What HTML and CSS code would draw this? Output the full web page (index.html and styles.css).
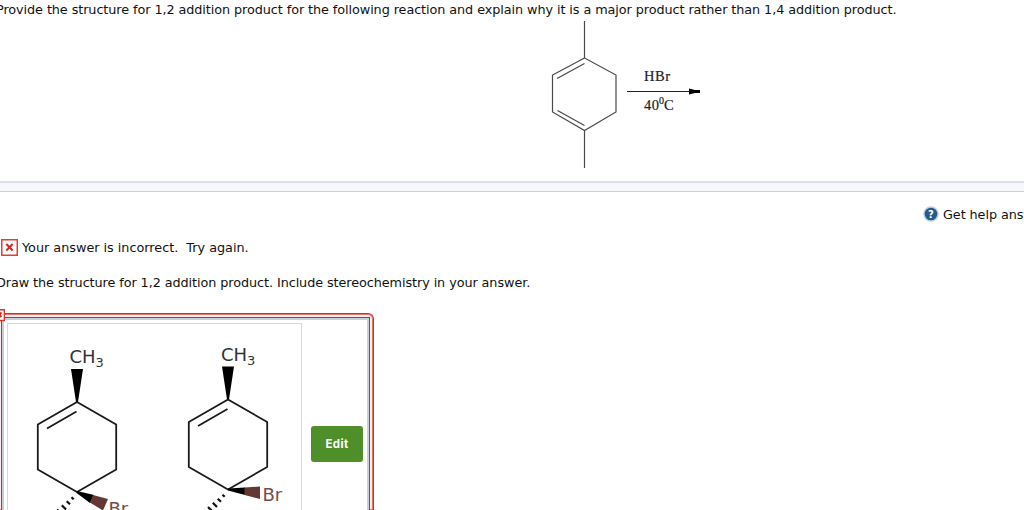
FILE: index.html
```html
<!DOCTYPE html>
<html lang="en">
<head>
  <meta charset="UTF-8">
  <title>1,2 addition product</title>
  <link rel="stylesheet" href="styles.css">
</head>
<body>
  <div class="question">
    <p class="question-text">Provide the structure for 1,2 addition product for the following reaction and explain why it is a major product rather than 1,4 addition product.</p>
    <svg class="reaction" width="160" height="152" viewBox="545 18 160 152">
      <g fill="none" stroke="#484848" stroke-width="1.2">
        <path d="M584.5 21V58L616 75V112L584.5 130.500L552.500 112V75L584.500 58M584.500 130.500V168"/>
        <path d="M557 78.500L584.500 63.500M557.500 110.500L584.500 125.500"/>
      </g>
      <path class="arrow" d="M627 91.500H692"/>
      <path d="M689 88.500L695 90H700V93H695L689 94.500Z"/>
      <text class="reagent" x="644" y="81" textLength="26">HBr</text>
      <text class="reagent" x="644" y="110" textLength="15">40</text>
      <text class="reagent degree" x="659" y="104">0</text>
      <text class="reagent" x="664" y="110">C</text>
    </svg>
  </div>

  <div class="divider"></div>

  <div class="help">
    <svg width="16" height="16" viewBox="0 0 16 16">
      <circle cx="8" cy="8" r="7.800" fill="#b9d3e4"/>
      <circle cx="8" cy="8" r="6.300" fill="#28598a"/>
      <text class="help-mark" x="8" y="11.700">?</text>
    </svg>
    <span>Get help answering</span>
  </div>

  <div class="feedback">
    <svg width="17" height="17" viewBox="0 0 17 17">
      <rect x=".75" y=".75" width="15.500" height="15.500" fill="#fff" stroke="#dc4038" stroke-width="1.500"/>
      <path class="cross" d="M5.300 5L11.700 11.500M11.700 5L5.300 11.500"/>
    </svg>
    <span>Your answer is incorrect.&nbsp; Try again.</span>
  </div>

  <p class="task">Draw the structure for 1,2 addition product. Include stereochemistry in your answer.</p>

  <div class="answer">
    <div class="answer-inner">
      <svg class="canvas" width="293" height="186" viewBox="8 324 293 186">
        <defs>
          <g id="ring">
            <path class="bond" d="M0 0L39.200 22.500V67.500L0 90L-39.200 67.500V22.500ZM-30 26.500L-.5 9.500"/>
            <path d="M-6 -33H6L1 0H-1Z"/>
            <path class="hash" d="M-5.500 95.200L-3.300 97.300M-10.300 99.200L-7 102.300M-15.200 103.300L-11 107.500M-20 107.500L-15 112.500"/>
          </g>
        </defs>
        <use href="#ring" x="77" y="402"/>
        <text class="atom" x="69.500" y="363">CH<tspan class="sub" dy="4">3</tspan></text>
        <path d="M77 491L94 495L90 503L76.500 493Z"/>
        <path class="br" d="M93 495L108 499L103 510.500L90 502.500Z"/>
        <text class="atom br-label" x="108.500" y="515">Br</text>

        <use href="#ring" x="228" y="399.500"/>
        <text class="atom" x="221" y="361">CH<tspan class="sub" dy="4">3</tspan></text>
        <path d="M228 488.500L245 487.500V495L228 490.500Z"/>
        <path class="br" d="M244.500 487.500L260 486.500V499L244.500 495Z"/>
        <text class="atom br-label" x="262.500" y="500.500">Br</text>
      </svg>
      <button class="edit">Edit</button>
    </div>
    <svg class="badge" width="9" height="13" viewBox="0 0 9 13">
      <path d="M-1 .75H5.300V11.500H-1" fill="#fff" stroke="#d9352d" stroke-width="1.300"/>
      <path class="cross" d="M-2 3.500L2.500 8M2.500 3.500L-2 8"/>
    </svg>
  </div>
</body>
</html>
```

FILE: styles.css
```css
body {
  margin: 0;
  height: 510px;
  overflow: hidden;
  background: #fff;
  color: #111;
  font-family: Verdana, "DejaVu Sans", sans-serif;
  font-size: 12.8px;
  letter-spacing: -.076px;
  line-height: 16px;
}
p {
  margin: 0;
  white-space: nowrap;
}
svg {
  flex: none;
  letter-spacing: 0;
}
.question {
  height: 181px;
}
.question-text {
  margin-left: -4px;
  padding-top: 2px;
}
.reaction {
  display: block;
  margin: 0 0 0 545px;
}
.arrow {
  stroke: #222;
  stroke-width: 1.2;
}
.reagent {
  font-family: "Liberation Serif", serif;
  font-size: 14.5px;
  fill: #222;
  stroke: #222;
  stroke-width: .2;
}
.degree {
  font-size: 10px;
}
.divider {
  height: 8px;
  background: #f6f8fb;
  border-top: 2px solid #dce1e8;
  border-bottom: 1px solid #c5d2dc;
}
.help {
  display: flex;
  gap: 4px;
  margin: 14px 0 0 923px;
  white-space: nowrap;
}
.help span {
  padding-top: 1px;
}
.help-mark {
  font-size: 10px;
  font-weight: bold;
  fill: #fff;
  text-anchor: middle;
}
.feedback {
  display: flex;
  align-items: center;
  gap: 4px;
  margin: 16px 0 0 1px;
  height: 17px;
  letter-spacing: -.01px;
}
.cross {
  fill: none;
  stroke: #d9281f;
  stroke-width: 2;
}
.task {
  margin: 19px 0 0 -4px;
}
.answer {
  position: relative;
  box-sizing: border-box;
  width: 377px;
  height: 197px;
  margin: 22px 0 0 -3px;
  border: 1px solid #d9281f;
  border-bottom: 0;
  border-radius: 6px 6px 0 0;
  padding: 3px 3px 0;
  background: #fdeceb;
  box-shadow: inset 0 0 0 1px #e8746e;
}
.answer-inner {
  display: flex;
  gap: 9px;
  box-sizing: border-box;
  height: 193px;
  padding: 5px 4px 0 5px;
  border: 1px solid #d9281f;
  border-bottom: 0;
  box-shadow: inset 2px 2px #c9cfda, inset -2px 0 #c9cfda;
  background: #fff;
}
.canvas {
  border: 1px solid #d3d9e0;
  border-bottom: 0;
}
.bond {
  fill: none;
  stroke: #1a1a1a;
  stroke-width: 1.8;
  stroke-linejoin: round;
}
.hash {
  fill: none;
  stroke: #111;
  stroke-width: 2.2;
}
.atom {
  font-family: "DejaVu Sans", sans-serif;
  font-size: 18px;
  fill: #333;
}
.sub {
  font-size: 13px;
}
.br {
  fill: #643634;
}
.atom.br-label {
  fill: #754c4a;
}
.edit {
  width: 52px;
  height: 36px;
  margin-top: 103px;
  padding: 0;
  border: 0;
  border-radius: 3px;
  background: #4f8f29;
  color: #fff;
  font: bold 11.5px Inter, sans-serif;
  letter-spacing: .4px;
}
.badge {
  position: absolute;
  top: -5px;
  left: 1px;
}
```
